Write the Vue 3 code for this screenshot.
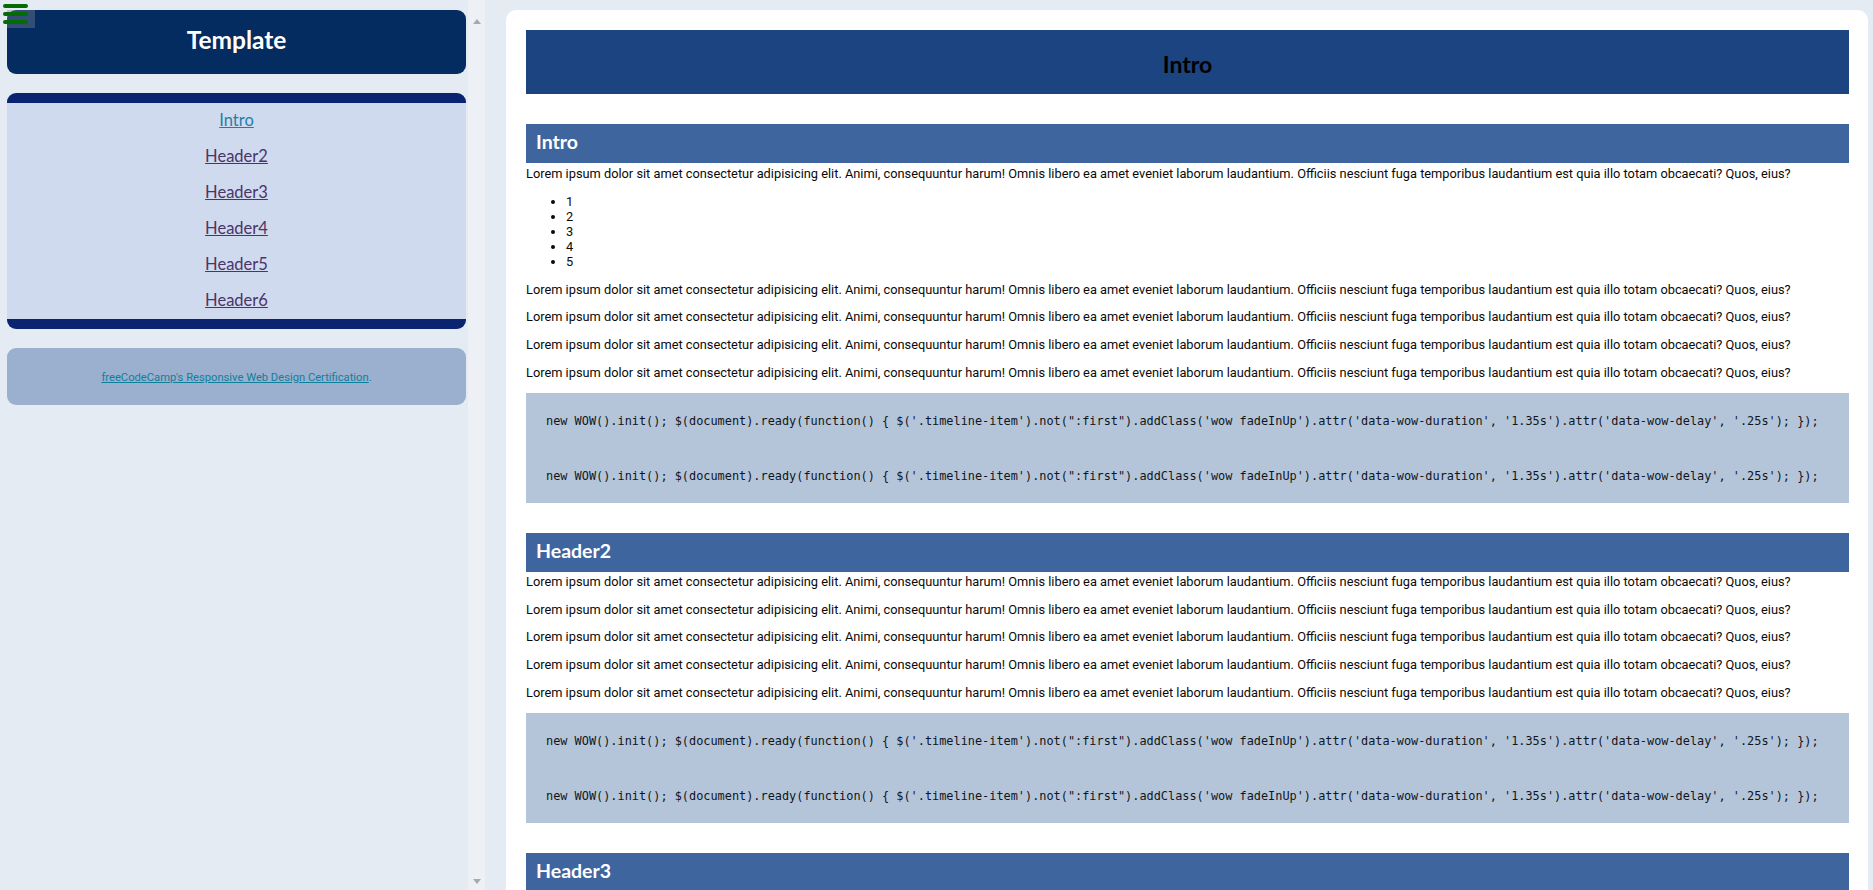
<script setup>
const lorem = 'Lorem ipsum dolor sit amet consectetur adipisicing elit. Animi, consequuntur harum! Omnis libero ea amet eveniet laborum laudantium. Officiis nesciunt fuga temporibus laudantium est quia illo totam obcaecati? Quos, eius?'
const code = `new WOW().init(); $(document).ready(function() { $('.timeline-item').not(":first").addClass('wow fadeInUp').attr('data-wow-duration', '1.35s').attr('data-wow-delay', '.25s'); });`
const links = ['Intro', 'Header2', 'Header3', 'Header4', 'Header5', 'Header6']
</script>

<template>
  <div class="page">
    <button class="burger" aria-label="menu">
      <span></span><span></span><span></span>
    </button>

    <aside class="sidebar">
      <header class="brand"><h2>Template</h2></header>
      <nav class="nav">
        <a v-for="(l, i) in links" :key="l" href="#" :class="{ current: i === 0 }">{{ l }}</a>
      </nav>
      <footer class="credit">
        <p><a href="#">freeCodeCamp's Responsive Web Design Certification</a>.</p>
      </footer>
    </aside>

    <div class="scrollbar">
      <i class="arrow up"></i>
      <i class="arrow down"></i>
    </div>

    <main class="card">
      <h1 class="banner">Intro</h1>

      <section class="block first">
        <h2>Intro</h2>
        <p>{{ lorem }}</p>
        <ul>
          <li v-for="n in 5" :key="n">{{ n }}</li>
        </ul>
        <p v-for="n in 4" :key="n">{{ lorem }}</p>
        <div class="code">
          <code>{{ code }}</code>
          <code>{{ code }}</code>
        </div>
      </section>

      <section class="block">
        <h2>Header2</h2>
        <p v-for="n in 5" :key="n">{{ lorem }}</p>
        <div class="code">
          <code>{{ code }}</code>
          <code>{{ code }}</code>
        </div>
      </section>

      <section class="block">
        <h2>Header3</h2>
      </section>
    </main>
  </div>
</template>

<style>
html, body { margin: 0; overflow: hidden; background: #e4ebf3; }
</style>

<style scoped>
.page {
  display: flex;
  height: 890px;
  overflow: hidden;
  background: #e4ebf3;
  font-family: Roboto, "Liberation Sans", sans-serif;
  font-size: 12.8px;
  color: #0a0a0a;
}
.burger {
  position: absolute;
  left: 3px;
  top: 4px;
  width: 32px;
  height: 24px;
  padding: 0;
  border: 0;
  background: linear-gradient(rgba(120, 130, 150, 0.4), rgba(120, 130, 150, 0.4)) 4px 6px / 28px 18px no-repeat;
  display: flex;
  flex-direction: column;
  gap: 4px;
  z-index: 2;
}
.burger span {
  display: block;
  width: 25px;
  height: 4px;
  border-radius: 2px;
  background: #056b05;
}
.sidebar {
  width: 459px;
  flex: none;
  padding: 10px 0 0 7px;
  display: flex;
  flex-direction: column;
  gap: 19px;
}
.brand {
  height: 64px;
  border-radius: 9px;
  background: #052c60;
  color: #fff;
  display: flex;
  align-items: center;
  justify-content: center;
}
.brand h2 {
  margin: 0 0 6px;
  font: 700 24.5px Lato, "Noto Sans", sans-serif;
}
.nav {
  box-sizing: border-box;
  height: 236px;
  border-radius: 9px;
  border-block: 10px solid #0b2470;
  background: #d0daef;
  display: flex;
  flex-direction: column;
  align-items: center;
}
.nav a {
  height: 36px;
  padding-bottom: 2px;
  box-sizing: border-box;
  display: flex;
  align-items: center;
  font: 400 16.5px Lato, "Noto Sans", sans-serif;
  color: #4d3366;
  text-decoration: underline;
}
.nav a.current { color: #1f7fa6; }
.credit {
  height: 57px;
  border-radius: 9px;
  background: #9bb0ce;
  display: flex;
  align-items: center;
  justify-content: center;
  font-size: 11.2px;
  color: #1a7f9c;
}
.credit p { margin: 2px 0 0; }
.credit a { color: #107f9c; }
.scrollbar {
  flex: none;
  width: 17px;
  margin-left: 2px;
  background: #edf1f6;
  display: flex;
  flex-direction: column;
  justify-content: space-between;
  align-items: center;
  padding: 19px 0 6px;
  box-sizing: border-box;
}
.arrow {
  width: 0;
  height: 0;
  border-inline: 4.5px solid transparent;
}
.arrow.up { border-bottom: 5px solid #a6a9ad; }
.arrow.down { border-top: 5px solid #a6a9ad; }
.card {
  flex: 1;
  margin: 10px 5px 0 21px;
  padding: 20px 19px 0 20px;
  background: #fff;
  border-radius: 10px 10px 0 0;
  min-width: 0;
}
.banner {
  margin: 0 0 30px;
  height: 64px;
  box-sizing: border-box;
  padding-top: 4px;
  background: #1b4480;
  color: #000;
  display: flex;
  align-items: center;
  justify-content: center;
  font: 700 23px Lato, "Noto Sans", sans-serif;
}
.block { margin-bottom: 30px; }
.block h2 {
  margin: 0 0 2px;
  height: 39px;
  box-sizing: border-box;
  padding: 0 0 4px 10px;
  background: #3f659f;
  color: #fff;
  display: flex;
  align-items: center;
  font: 700 19.5px Lato, "Noto Sans", sans-serif;
}
.block.first h2 { margin-bottom: 3px; }
.block p { margin: 0 0 12.8px; }
.block ul { margin: 12.8px 0; padding-left: 40px; }
.code { background: #b5c5d9; }
.code code {
  display: block;
  padding: 21px 20px 19px;
  font-family: "DejaVu Sans Mono", "Liberation Mono", monospace;
  font-size: 11.88px;
  line-height: 15px;
  color: #10151c;
  white-space: nowrap;
}
</style>
